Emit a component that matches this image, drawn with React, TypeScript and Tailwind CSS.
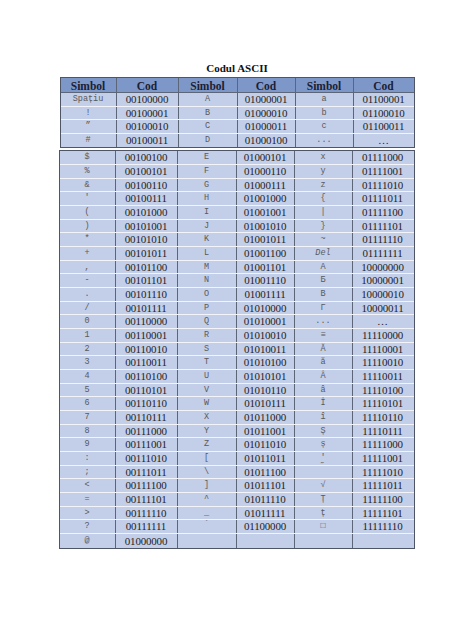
const rows: [string, string, string, string, string, string][] = [
  ["Spațiu", "00100000", "A", "01000001", "a", "01100001"],
  ["!", "00100001", "B", "01000010", "b", "01100010"],
  ["\u201d", "00100010", "C", "01000011", "c", "01100011"],
  ["#", "00100011", "D", "01000100", "...", "…"],
  ["$", "00100100", "E", "01000101", "x", "01111000"],
  ["%", "00100101", "F", "01000110", "y", "01111001"],
  ["&", "00100110", "G", "01000111", "z", "01111010"],
  ["'", "00100111", "H", "01001000", "{", "01111011"],
  ["(", "00101000", "I", "01001001", "|", "01111100"],
  [")", "00101001", "J", "01001010", "}", "01111101"],
  ["*", "00101010", "K", "01001011", "~", "01111110"],
  ["+", "00101011", "L", "01001100", "Del", "01111111"],
  [",", "00101100", "M", "01001101", "А", "10000000"],
  ["-", "00101101", "N", "01001110", "Б", "10000001"],
  [".", "00101110", "O", "01001111", "В", "10000010"],
  ["/", "00101111", "P", "01010000", "Г", "10000011"],
  ["0", "00110000", "Q", "01010001", "...", "…"],
  ["1", "00110001", "R", "01010010", "≡", "11110000"],
  ["2", "00110010", "S", "01010011", "Ă", "11110001"],
  ["3", "00110011", "T", "01010100", "ă", "11110010"],
  ["4", "00110100", "U", "01010101", "Â", "11110011"],
  ["5", "00110101", "V", "01010110", "â", "11110100"],
  ["6", "00110110", "W", "01010111", "Î", "11110101"],
  ["7", "00110111", "X", "01011000", "î", "11110110"],
  ["8", "00111000", "Y", "01011001", "Ș", "11110111"],
  ["9", "00111001", "Z", "01011010", "ș", "11111000"],
  [":", "00111010", "[", "01011011", "'", "11111001"],
  [";", "00111011", "\\", "01011100", "˝", "11111010"],
  ["<", "00111100", "]", "01011101", "√", "11111011"],
  ["=", "00111101", "^", "01011110", "Ț", "11111100"],
  [">", "00111110", "_", "01011111", "ț", "11111101"],
  ["?", "00111111", "`", "01100000", "□", "11111110"],
  ["@", "01000000", "", "", "", ""],
];

const grid = "grid grid-cols-[56px_62px_59px_58px_58px_60px]";

function Sym({ v }: { v: string }) {
  const extra =
    v === "Del"
      ? "italic"
      : v === "˝"
        ? "-translate-y-[5px]"
        : v === "`"
          ? "-translate-y-[2px]"
          : "";
  return (
    <div className="flex items-center justify-center border-r border-[#5d6679] font-['Liberation_Mono',monospace] text-[8.5px] leading-none text-[#5a5a5a]">
      <span className={extra}>{v}</span>
    </div>
  );
}

function Cod({ v, last }: { v: string; last?: boolean }) {
  return (
    <div
      className={`flex items-center justify-center ${last ? "" : "border-r border-[#5d6679]"} font-['Liberation_Serif',serif] text-[11px] leading-none tracking-[-0.2px] text-[#1f1f1f]`}
    >
      {v}
    </div>
  );
}

function Row({ r, last, short }: { r: string[]; last?: boolean; short?: boolean }) {
  return (
    <div
      className={`${grid} ${short ? "h-[13px]" : "h-[14px]"} ${last ? "" : "border-b border-[#f2f4f9] shadow-[0_1px_0_#a3adc2]"} relative bg-[#c3cee8]`}
    >
      <Sym v={r[0]} />
      <Cod v={r[1]} />
      <Sym v={r[2]} />
      <Cod v={r[3]} />
      <Sym v={r[4]} />
      <Cod v={r[5]} last />
    </div>
  );
}

export default function App() {
  const heads = ["Simbol", "Cod", "Simbol", "Cod", "Simbol", "Cod"];
  return (
    <div className="min-h-[632px] w-[474px] bg-white pt-[61px]">
      <h1 className="h-[15px] text-center font-['Liberation_Serif',serif] text-[11px] leading-[15px] font-bold text-[#111]">
        Codul ASCII
      </h1>
      <div className="mx-auto mt-[1px] w-[355px]">
        <div className="border border-[#4d5566]">
          <div
            className={`${grid} h-[15px] border-b border-[#5d6679] bg-[#7d97c8]`}
          >
            {heads.map((h, i) => (
              <div
                key={i}
                className={`flex items-center justify-center ${i < 5 ? "border-r border-[#5d6679]" : ""} font-['Liberation_Serif',serif] text-[11.5px] font-bold text-[#1b2033]`}
              >
                {h}
              </div>
            ))}
          </div>
          {rows.slice(0, 4).map((r, i) => (
            <Row key={i} r={r} last={i === 3} short={i % 2 === 1} />
          ))}
        </div>
        <div className="mt-[2px] -ml-[1px] border border-[#4d5566]">
          {rows.slice(4).map((r, i) => (
            <Row
              key={i}
              r={r}
              last={i === rows.length - 5}
              short={i % 3 === 2}
            />
          ))}
        </div>
      </div>
    </div>
  );
}
